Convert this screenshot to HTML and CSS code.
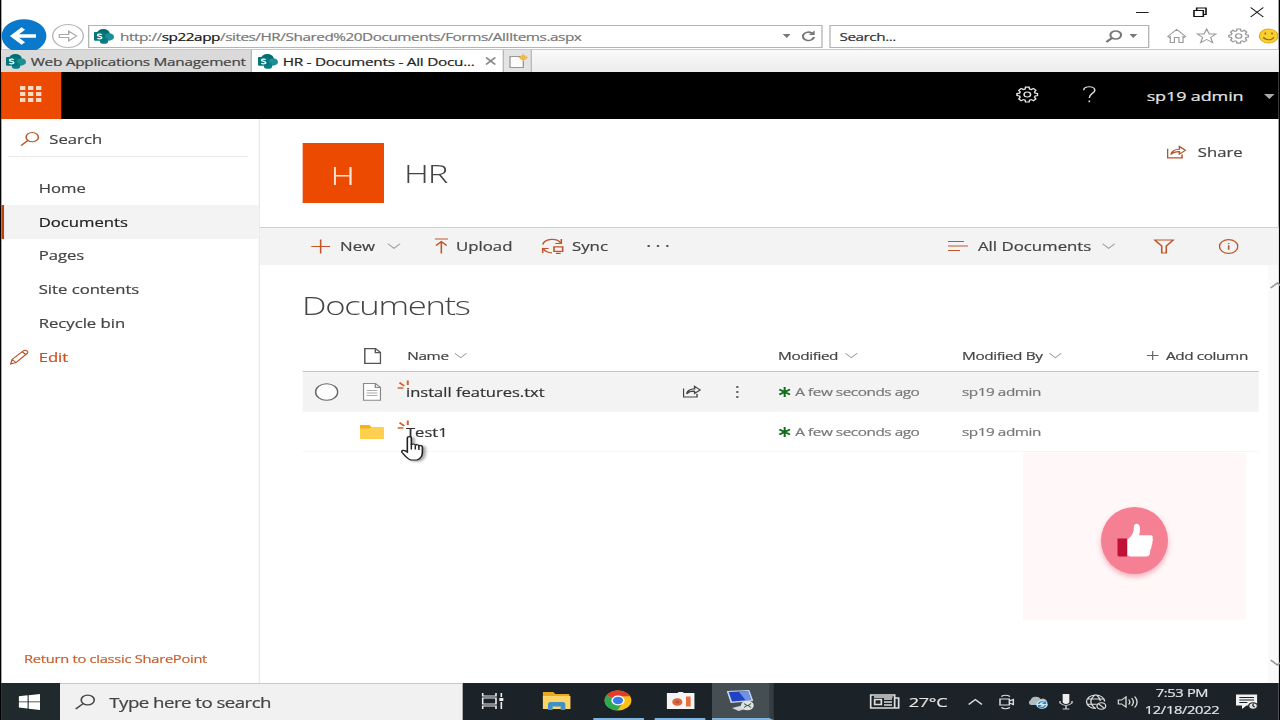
FILE: index.html
```html
<!DOCTYPE html>
<html lang="en">
<head>
  <meta charset="UTF-8">
  <meta name="viewport" content="width=device-width, initial-scale=1.0">
  <title>HR - Documents - All Documents</title>
  <link rel="stylesheet" href="styles.css">
</head>
<body>
  <!-- shared shapes -->
  <svg class="defs" width="0" height="0">
    <symbol id="sharepoint" viewBox="0 0 16 16">
      <circle cx="7.5" cy="5.2" r="5.2" fill="#036c70"/>
      <circle cx="12" cy="8.4" r="4" fill="#1a8f96"/>
      <circle cx="8" cy="12.4" r="3.4" fill="#0b7d84"/>
      <rect x="0" y="3.2" width="9" height="9.4" rx="0.8" fill="#03787c"/>
      <path d="M6.200 6C5.200 5.200 2.900 5.300 2.900 6.700s3.300 1 3.300 2.500-2.300 1.500-3.500.6" fill="none" stroke="#fff" stroke-width="1.3"/>
    </symbol>
    <symbol id="chevron" viewBox="0 0 12 8">
      <path d="M1 1.5l5 5 5-5" fill="none" stroke="currentColor"/>
    </symbol>
    <symbol id="gear" viewBox="0 0 18 18">
      <path d="M7.6 1.2h2.8l.4 2 1.3.6 1.8-1.2 1.9 1.9-1.1 1.8.5 1.3 2 .4v2.2l-2 .4-.5 1.3 1.1 1.8-1.9 1.9-1.8-1.2-1.3.6-.4 2H7.6l-.4-2-1.3-.6-1.8 1.2-1.9-1.9 1.1-1.8-.5-1.3-2-.4V8l2-.4.5-1.3-1.1-1.8 1.9-1.9 1.8 1.2 1.3-.6z" fill="none" stroke="currentColor" stroke-width="1.2"/>
      <circle cx="9" cy="9" r="2.6" fill="none" stroke="currentColor" stroke-width="1.2"/>
    </symbol>
    <symbol id="search" viewBox="0 0 16 16">
      <circle cx="9.8" cy="6" r="4.9" fill="none" stroke="currentColor" stroke-width="1.2"/>
      <path d="M6.3 9.6L.8 15" stroke="currentColor" stroke-width="1.3"/>
    </symbol>
    <symbol id="share" viewBox="0 0 16 14">
      <path d="M.7 3.5v9.8h11.6V9.6M3.4 9.7C4 6.3 6.3 4.1 10.2 4V1.2l4.8 4-4.8 4V6.6C7.2 6.5 5 7.4 3.4 9.7z" fill="none" stroke="currentColor" stroke-width="1.2"/>
    </symbol>
    <symbol id="burst" viewBox="0 0 10 12">
      <path d="M0 8.2h5M1.800 2.200l4 3.800M8.700 0v5" fill="none" stroke="#d2622d" stroke-width="1.700"/>
    </symbol>
  </svg>

  <div class="desktop">
    <div class="titlebar">
      <svg width="13" height="12" viewBox="0 0 13 12"><path d="M2 6.5h9.5" stroke="#222"/></svg>
      <svg width="13" height="12" viewBox="0 0 13 12"><path d="M2.5 4.5h7v6h-7zM4.5 4.500v-2.500h7v6.500h-2" fill="none" stroke="#111" stroke-width="1.2"/></svg>
      <svg width="13" height="12" viewBox="0 0 13 12"><path d="M2 1.500l9.500 9.500M11.500 1.500L2 11" stroke="#111"/></svg>
    </div>

    <div class="navbar">
      <svg class="back" width="36" height="36" viewBox="0 0 36 36">
        <circle cx="18" cy="18" r="16.800" fill="#0a79cc"/>
        <path d="M27 18H10M17.500 10.500L10 18l7.500 7.500" fill="none" stroke="#fff" stroke-width="3.600"/>
      </svg>
      <svg class="forward" width="26" height="26" viewBox="0 0 26 26">
        <circle cx="13" cy="13" r="11.500" fill="#fff" stroke="#b5b5b5"/>
        <path d="M6.500 11.500h7V8l6 5-6 5v-3.500h-7z" fill="none" stroke="#aaa"/>
      </svg>
      <div class="address">
        <svg width="16" height="15"><use href="#sharepoint"/></svg>
        <span class="url">http://<b>sp22app</b>/sites/HR/Shared%20Documents/Forms/AllItems.aspx</span>
        <svg class="caret" width="6" height="4" viewBox="0 0 6 4"><path d="M0 0h6L3 4z" fill="#777"/></svg>
        <svg width="11" height="12" viewBox="0 0 11 12"><path d="M9.500 7a4.200 4.200 0 1 1-1.600-4" fill="none" stroke="#777" stroke-width="1.600"/><path d="M10 .500v4.500H5.500z" fill="#777"/></svg>
      </div>
      <div class="searchbox">
        <span>Search...</span>
        <svg width="13" height="13" class="glass" viewBox="0 0 13 13"><circle cx="7.800" cy="5" r="4" fill="none" stroke="#777" stroke-width="1.600"/><path d="M5 8L.800 12" stroke="#777" stroke-width="1.800"/></svg>
        <svg class="caret" width="6" height="4" viewBox="0 0 6 4"><path d="M0 0h6L3 4z" fill="#777"/></svg>
      </div>
      <div class="tools">
        <svg width="15" height="16" viewBox="0 0 15 16"><path d="M.800 8.500L7.500 1.500l6.700 7-1 .900-.900-.900v6H9.200V9.500H5.800v5H2.700v-6l-.900.900z" fill="none" stroke="#999" stroke-width=".9"/></svg>
        <svg width="16" height="16" viewBox="0 0 16 16"><path d="M8 1l2 5h5l-4 3.300 1.500 5.400L8 11.500l-4.500 3.200L5 9.300 1 6h5z" fill="none" stroke="#999" stroke-width=".9"/></svg>
        <svg class="gray" width="16" height="16"><use href="#gear"/></svg>
        <svg width="15" height="16" viewBox="0 0 15 16"><circle cx="7.500" cy="8" r="7" fill="#fad02f" stroke="#dca719" stroke-width=".8"/><path d="M5 4.500v2M10 4.500v2M3.500 9.300c1.500 3.300 6.500 3.300 8 0" fill="none" stroke="#8b6914" stroke-width="1.100"/></svg>
      </div>
    </div>

    <div class="tabs">
      <div class="tab tab-first">
        <svg width="16" height="15"><use href="#sharepoint"/></svg>
        <span>Web Applications Management</span>
      </div>
      <div class="tab tab-active">
        <svg width="16" height="15"><use href="#sharepoint"/></svg>
        <span>HR - Documents - All Docu...</span>
        <svg class="close" width="8" height="8" viewBox="0 0 8 8"><path d="M.500.500l7 7M7.500.500l-7 7" stroke="#888" stroke-width="1.500"/></svg>
      </div>
      <div class="tab tab-new">
        <svg width="15" height="15" viewBox="0 0 15 15"><path d="M1.500 2.500h10v11h-10z" fill="#fcfcfc" stroke="#999"/><circle cx="11.500" cy="3.500" r="2.600" fill="#f4b942"/><path d="M11.500 0v7M8 3.500h7" stroke="#f4b942"/></svg>
      </div>
    </div>

    <div class="suitebar">
      <div class="waffle"><i></i><i></i><i></i><i></i><i></i><i></i><i></i><i></i><i></i></div>
      <svg class="suite-gear" width="17" height="17"><use href="#gear"/></svg>
      <svg class="suite-help" width="10" height="17" viewBox="0 0 10 17"><path d="M.800 4.200C.900-.500 9.100-.300 9.100 4.200 9.100 7.300 5 7.500 5 12M5 14.500v1.800" fill="none" stroke="#ddd" stroke-width="1.200"/></svg>
      <span class="user">sp19 admin</span>
      <svg class="caret" width="8" height="5" viewBox="0 0 8 5"><path d="M0 0h8L4 5z" fill="#aaa"/></svg>
    </div>

    <div class="page">
      <div class="sidebar">
        <div class="side-search">
          <svg width="15" height="16"><use href="#search"/></svg>
          <span>Search</span>
        </div>
        <div class="side-nav">
          <a>Home</a>
          <a class="selected">Documents</a>
          <a>Pages</a>
          <a>Site contents</a>
          <a>Recycle bin</a>
          <a class="edit">
            <svg width="15" height="16" viewBox="0 0 15 16"><path d="M1 15l1-4.500L11 1.500c1.500-1 3.500 1 2.600 2.600L5 13.500zM2 10.500l3 3M9.700 2.800l2.900 2.900" fill="none" stroke="#b5532a"/></svg>
            Edit
          </a>
        </div>
        <a class="classic">Return to classic SharePoint</a>
      </div>

      <div class="main">
        <div class="site-header">
          <div class="site-logo">H</div>
          <h1>HR</h1>
          <div class="share">
            <svg width="15" height="14"><use href="#share"/></svg>
            <span>Share</span>
          </div>
        </div>

        <div class="commands">
          <svg class="c-plus" width="15" height="15" viewBox="0 0 15 15"><path d="M7.500.500v14M.500 7.500h14" stroke="#c2562a" stroke-width="1.200"/></svg>
          <span class="c-new">New</span>
          <svg class="chev" width="11" height="8"><use href="#chevron"/></svg>
          <svg class="c-up" width="10" height="16" viewBox="0 0 10 16"><path d="M0 1h10M5 3v12.500M1 7.500l4-4 4 4" fill="none" stroke="#c2562a" stroke-width="1.200"/></svg>
          <span class="c-upload">Upload</span>
          <svg class="c-syncicon" width="17" height="16" viewBox="0 0 17 16"><path d="M1 6.500C3 0 12 0 14.500 5M15 1v4.500h-4.500M1 15v-4.500h4.500M1.500 10.800c1.500 3 4 4 6.500 4M9.500 8.800h6.500v4.500H9.500zM11 15.300h3.500" fill="none" stroke="#c2562a" stroke-width="1.200"/></svg>
          <span class="c-sync">Sync</span>
          <svg class="c-more" width="17" height="4" viewBox="0 0 17 4"><circle cx="1.500" cy="2" r="1"/><circle cx="8.500" cy="2" r="1"/><circle cx="15.500" cy="2" r="1"/></svg>
          <svg class="c-lines" width="15" height="10" viewBox="0 0 15 10"><path d="M0 .500h12M0 5h15M0 9.500h9" stroke="#c2562a"/></svg>
          <span class="c-view">All Documents</span>
          <svg class="chev" width="11" height="8"><use href="#chevron"/></svg>
          <svg class="c-filter" width="16" height="15" viewBox="0 0 16 15"><path d="M1 1h14L9.700 7v7H6.300V7z" fill="none" stroke="#c2562a" stroke-width="1.200"/></svg>
          <svg class="c-info" width="15" height="15" viewBox="0 0 15 15"><circle cx="7.500" cy="7.500" r="6.900" fill="none" stroke="#c2562a" stroke-width="1.100"/><path d="M7.500 6.300v4.500M7.500 3.900v1.200" stroke="#c2562a" stroke-width="1.200"/></svg>
        </div>

        <div class="library">
          <h2>Documents</h2>
          <div class="row head">
            <span></span>
            <span class="center"><svg width="13" height="16" viewBox="0 0 13 16"><path d="M.600.600h8l3.800 3.800v11H.600zM8.500.800v3.800h3.800" fill="none" stroke="#555" stroke-width="1.100"/></svg></span>
            <span class="cell">Name <svg width="11" height="7"><use href="#chevron"/></svg></span>
            <span></span>
            <span></span>
            <span class="cell">Modified <svg width="11" height="7"><use href="#chevron"/></svg></span>
            <span class="cell">Modified By <svg width="11" height="7"><use href="#chevron"/></svg></span>
            <span class="cell add"><svg width="9" height="11" viewBox="0 0 9 11"><path d="M4.500 1v9M0 5.500h9" stroke="#666" stroke-width=".9"/></svg>Add column</span>
          </div>
          <div class="row hover">
            <span class="center"><svg width="18" height="18" viewBox="0 0 18 18"><circle cx="9" cy="9" r="8.300" fill="#fff" stroke="#666" stroke-width="1.100"/></svg></span>
            <span class="center"><svg width="14" height="18" viewBox="0 0 14 18"><path d="M.600.600h9l3.800 3.800v12.800H.600zM9.500.800v3.800h3.800" fill="#fff" stroke="#8a8a8a"/><path d="M3 7.500h8M3 10h8M3 12.500h8" stroke="#aaa"/></svg></span>
            <span class="cell name">install features.txt<svg class="burst" width="9" height="12"><use href="#burst"/></svg></span>
            <span class="center"><svg class="dark" width="14" height="13"><use href="#share"/></svg></span>
            <span class="center"><svg width="4" height="14" viewBox="0 0 4 14" fill="#555"><circle cx="2" cy="2" r="1"/><circle cx="2" cy="7" r="1"/><circle cx="2" cy="12" r="1"/></svg></span>
            <span class="cell meta"><svg width="9" height="10" viewBox="0 0 9 10"><path d="M4.500 0v10M.500 2.500l8 5M8.500 2.500l-8 5" stroke="#0f6c18" stroke-width="1.500"/></svg>A few seconds ago</span>
            <span class="cell meta">sp19 admin</span>
            <span></span>
          </div>
          <div class="row">
            <span></span>
            <span class="center"><svg width="18" height="14" viewBox="0 0 18 14"><path d="M0 0h7l1.500 2H18v12H0z" fill="#f0b41c"/><path d="M0 3.500h7L9 2h9v12H0z" fill="#ffd04f"/></svg></span>
            <span class="cell name">Test1<svg class="burst" width="9" height="12"><use href="#burst"/></svg></span>
            <span></span>
            <span></span>
            <span class="cell meta"><svg width="9" height="10" viewBox="0 0 9 10"><path d="M4.500 0v10M.500 2.500l8 5M8.500 2.500l-8 5" stroke="#0f6c18" stroke-width="1.500"/></svg>A few seconds ago</span>
            <span class="cell meta">sp19 admin</span>
            <span></span>
          </div>
        </div>

        <div class="scrollbar">
          <svg width="8" height="8" viewBox="0 0 8 8"><path d="M1 7l5-5 5 5" fill="none" stroke="#999" stroke-width="1.500"/></svg>
          <svg width="8" height="8" viewBox="0 0 8 8"><path d="M1 1l5 5 5-5" fill="none" stroke="#999" stroke-width="1.500"/></svg>
        </div>
      </div>
    </div>

    <div class="taskbar">
      <div class="start">
        <svg width="16" height="16" viewBox="0 0 16 16" fill="#fff"><path d="M0 2.200l6.700-.900v6.200H0zM7.500 1.200L16 0v7.500H7.500zM0 8.300h6.700v6.200L0 13.600zM7.500 8.300H16V16l-8.500-1.200z"/></svg>
      </div>
      <div class="task-search">
        <svg width="16" height="16"><use href="#search"/></svg>
        <span>Type here to search</span>
      </div>
      <div class="task taskview">
        <svg width="17" height="16" viewBox="0 0 17 16"><path d="M1 0v3h10V0M1 16v-3h10v3M1 5h10v6H1zM15 0v4M15 9v7" fill="none" stroke="#eee" stroke-width="1.200"/><path d="M13.500 5h3v3h-3z" fill="#eee"/></svg>
      </div>
      <div class="task">
        <svg width="21" height="18" viewBox="0 0 21 18"><path d="M0 0h8l1.500 2H20v5H0z" fill="#e9a820"/><path d="M0 4h21v13H0z" fill="#ffd466"/><path d="M4 18v-6q0-2 2-2h9q2 0 2 2v6h-3.500v-3.500h-6V18z" fill="#3e92c9"/></svg>
      </div>
      <div class="task open">
        <svg width="21" height="21" viewBox="0 0 22 22"><circle cx="11" cy="11" r="10.500" fill="#fbc116"/><path d="M11 11L1.900 5.700A10.500 10.500 0 0 1 20.100 5.700L20.100 6.500H11z" fill="#e33b2e"/><path d="M11 11L1.900 5.700A10.500 10.500 0 0 0 10.500 21.500L15 13z" fill="#2da94f"/><circle cx="11" cy="11" r="5.200" fill="#fff"/><circle cx="11" cy="11" r="4" fill="#3b7de8"/></svg>
      </div>
      <div class="task open">
        <svg width="21" height="18" viewBox="0 0 21 18"><path d="M0 1h8l1-1h3l1 1h8v16H0z" fill="#f6f4f4"/><circle cx="8" cy="10" r="3.800" fill="#dc653d"/><circle cx="8" cy="10" r="1.300" fill="#b84d2c"/><path d="M14.500 4.500h3.500v10h-3.500z" fill="#e4713d"/></svg>
      </div>
      <div class="task open current">
        <svg width="21" height="21" viewBox="0 0 21 21"><path d="M0 1l17-1 3 11-17 2z" fill="#c8d4ea"/><path d="M1.500 2l14.500-1 2.300 9L4 11.500z" fill="#2043c4"/><path d="M9 1.500l7-.5 2.300 9-4 .5z" fill="#7191e6"/><path d="M4 18l9-3 3 3-7 3z" fill="#d4d8dd"/><circle cx="15.500" cy="15.500" r="4.800" fill="#dfe6df"/><path d="M13 13.500l2.200 2-2.200 2M18.300 13.500l-2.200 2 2.200 2" fill="none" stroke="#3d5945"/></svg>
      </div>

      <div class="tray">
        <div class="news"><svg width="23" height="15" viewBox="0 0 23 15"><path d="M1 1h18v13H1zM19 4h3v10h-3M4 5.500h5v5H4zM11 5h6M11 8h6M11 11h6M3.500 3h14" fill="none" stroke="#ddd" stroke-width="1.300"/></svg></div>
        <div class="temp">27°C</div>
        <div class="up"><svg width="11" height="7" viewBox="0 0 11 7"><path d="M.500 6.500l5-5 5 5" fill="none" stroke="#ddd" stroke-width="1.200"/></svg></div>
        <div class="cam"><svg width="12" height="16" viewBox="0 0 12 16"><path d="M1 5h7v6H1zM8 7l3-1.500v5L8 9M2 2.500Q5 0 8.500 2.500M2 13.500Q5 16 8.500 13.500" fill="none" stroke="#ddd" stroke-width="1.100"/></svg></div>
        <div class="cloud"><svg width="16" height="14" viewBox="0 0 16 14"><path d="M3 10a3 3 0 0 1 0-5 4 4 0 0 1 7.500-1A3.500 3.500 0 0 1 14 10z" fill="#b3babd"/><circle cx="11.500" cy="9.500" r="4.300" fill="#c9e7f8"/><path d="M9 9a2.600 2.600 0 0 1 5-.6M14 10.200a2.600 2.600 0 0 1-5 .5M14 6.500v2h-2M9 12.500v-2h2" fill="none" stroke="#2783be" stroke-width="1.100"/></svg></div>
        <div class="mic"><svg width="11" height="16" viewBox="0 0 11 16"><path d="M3 0h5v8.500q-2.500 3-5 0z" fill="#eee"/><path d="M1 7v2q4.500 5 9 0V7M5.500 11.500V15M3 15h5" fill="none" stroke="#ccc" stroke-width="1.100"/></svg></div>
        <div class="globe"><svg width="16" height="16" viewBox="0 0 16 16"><path d="M14.500 7.500A6.800 6.800 0 1 0 8 14.500M7.700.700C3 5 3 10 7.700 14.500M7.700.700c2.300 2 3.300 4.300 3.500 6.300M1.500 5h12.500M1.500 10.300h7" fill="none" stroke="#ddd"/><circle cx="12" cy="12" r="3.300" fill="#1b2328" stroke="#ddd"/><path d="M9.700 9.700l4.600 4.600" stroke="#ddd"/></svg></div>
        <div class="sound"><svg width="16" height="14" viewBox="0 0 16 14"><path d="M.700 5v4h2.500L6.500 12V2L3.200 5zM8.500 4.500q1.700 2.500 0 5M10.700 3q2.700 4 0 8M13 1.500q3.700 5.500 0 11" fill="none" stroke="#ddd"/></svg></div>
        <div class="clock"><span>7:53 PM</span><span>12/18/2022</span></div>
        <div class="notes"><svg width="16" height="16" viewBox="0 0 16 16"><path d="M0 .500h16v11h-8L4.500 15v-3.500H0z" fill="#f1f1f1"/><path d="M2.500 3.500h11M2.500 6h11M2.500 8.500h6" stroke="#1b2328"/><circle cx="12.800" cy="12" r="3.300" fill="#e0e0e0" stroke="#1b2328"/><path d="M13.500 9.500q-2 2 .5 3.500" fill="none" stroke="#1b2328"/></svg></div>
      </div>
    </div>

    <svg class="pointer" width="20" height="27" viewBox="0 0 20 27">
      <path d="M6.500 16V3.200C6.500 1 9.500 1 9.500 3.200V10c.600-1.500 3-1.300 3 .500.500-1.300 2.700-1 2.700.700.600-1 2.600-.700 2.600 1V17c0 4-2 7-4 8H9c-2-1-4.500-4.500-6.300-7.300C1.500 15.500 3.500 14 6.500 17z" fill="#fff" stroke="#222" stroke-width="1.200"/>
      <path d="M9.500 9.500v5M12.500 10.500v4M15.200 11.500v3.500" stroke="#222" stroke-width="1.100"/>
    </svg>
  </div>

  <div class="like-panel">
    <div class="like">
      <svg width="38" height="36" viewBox="0 0 38 36"><path d="M1.500 16.500h9.500v18H3q-1.500 0-1.500-1.500z" fill="#bf1236"/><path d="M11.500 17.500c4-3 6.500-7 6.300-12 0-5 5.700-5 6.200.500.200 3-.300 5.500-1 7.300h12c1.500 0 2 1 1.500 2.400.600 1.500.500 3-.200 4 .300 1.800 0 3-.800 4 .200 1.700-.300 3-1.200 3.800 0 5-1 7-4.300 7H15.500c-2.500 0-4-.5-4-2z" fill="#fff"/></svg>
    </div>
  </div>
</body>
</html>
```
FILE: styles.css
```css
* {
  box-sizing: border-box;
}
body {
  margin: 0;
  width: 1280px;
  height: 720px;
  overflow: hidden;
  background: #fff;
  font-family: "Open Sans", "Noto Sans", sans-serif;
  color: #444;
}
svg {
  display: block;
  flex: none;
}
.defs {
  position: absolute;
}

/* 4:3 desktop shown on a widescreen display */
.desktop {
  position: relative;
  width: 960px;
  height: 720px;
  display: flex;
  flex-direction: column;
  transform: scaleX(1.33333);
  transform-origin: 0 0;
  border-left: 1px solid #000;
  border-right: 1px solid #000;
  font-size: 12.5px;
  white-space: nowrap;
  -webkit-text-stroke: 0.2px;
}

/* browser */
.titlebar {
  height: 23px;
  display: flex;
  justify-content: flex-end;
  align-items: center;
  gap: 30px;
  padding: 1px 10px 0 0;
}
.navbar {
  height: 27px;
  display: flex;
  align-items: center;
  border-bottom: 1px solid #c8c8c8;
}
.back {
  margin: -5px 0 -5px -1px;
}
.forward {
  margin: 0 2px 0 2px;
}
.address,
.searchbox {
  display: flex;
  align-items: center;
  height: 23px;
  border: 1px solid #b4b4b4;
  background: #fff;
  font-size: 11.5px;
  letter-spacing: -0.35px;
}
.address {
  width: 552px;
  padding: 0 4px 0 3px;
}
.url {
  flex: 1;
  margin-left: 4px;
  color: #777;
}
.url b {
  font-weight: 500;
  color: #111;
}
.address .caret {
  margin-right: 8px;
}
.searchbox {
  width: 241px;
  margin-left: 5px;
  padding: 0 8px 0 7px;
  color: #333;
}
.searchbox .glass {
  margin-left: auto;
  margin-right: 5px;
}
.tools {
  display: flex;
  gap: 7.5px;
  margin-left: 12.5px;
}
.gray {
  color: #999;
}
.tabs {
  height: 22px;
  display: flex;
  background: linear-gradient(#fafafa, #ececec);
}
.tab {
  display: flex;
  align-items: center;
  gap: 3px;
  padding-left: 4px;
  border-right: 1px solid #b8b8b8;
  font-size: 11.5px;
  letter-spacing: -0.2px;
}
.tab-first {
  width: 188px;
  padding-left: 3px;
  background: #dadada;
}
.tab-active {
  width: 189px;
  background: #fff;
  color: #222;
}
.close {
  margin-left: auto;
  margin-right: 5px;
}
.tab-new {
  width: 21px;
  padding-left: 3px;
  background: #e4e4e4;
}

/* suite bar */
.suitebar {
  height: 47px;
  display: flex;
  align-items: center;
  background: #000;
  color: #e6e6e6;
}
.waffle {
  width: 45px;
  height: 47px;
  display: grid;
  grid-template-columns: repeat(3, 4px);
  gap: 2px;
  justify-content: center;
  align-content: center;
  padding: 0 2px 3px 0;
  background: #eb4a00;
}
.waffle i {
  height: 4px;
  background: #ffd9c4;
}
.suite-gear {
  margin-left: 716px;
  margin-bottom: 2px;
}
.suite-help {
  margin-left: 33px;
  margin-bottom: 2px;
}
.user {
  width: 74px;
  margin-left: 38px;
  padding-top: 1px;
  font-size: 13.5px;
  letter-spacing: -0.1px;
}
.suitebar .caret {
  margin-top: 2px;
  margin-left: 14px;
}

/* page */
.page {
  height: 564px;
  display: flex;
}
.sidebar {
  width: 194px;
  display: flex;
  flex-direction: column;
  border-right: 1px solid #eaeaea;
}
.side-search {
  height: 38px;
  display: flex;
  align-items: center;
  gap: 7px;
  margin: 0 8px 0 5px;
  padding: 3px 0 0 9px;
  border-bottom: 1px solid #eaeaea;
}
.side-nav {
  display: flex;
  flex-direction: column;
  margin-top: 14px;
}
.side-nav a {
  height: 33.8px;
  display: flex;
  align-items: center;
  padding-top: 1px;
  padding-left: 28px;
}
.side-nav .selected {
  border-left: 2px solid #c43e0a;
  padding-left: 26px;
  background: #f3f3f3;
  color: #222;
}
.side-nav .edit {
  padding-left: 6px;
  gap: 7px;
  color: #d0501c;
}
.side-search svg {
  color: #b5532a;
}
.classic {
  margin: auto 0 16px 17px;
  font-size: 11px;
  letter-spacing: -0.2px;
  line-height: 17px;
  color: #c8602f;
}
.main {
  flex: 1;
  display: grid;
  grid-template-columns: 1fr 8px;
  grid-template-rows: 108px 38px 1fr;
}
.site-header,
.commands {
  grid-column: 1 / 3;
}
.site-header {
  display: flex;
  align-items: flex-start;
  padding: 24px 27px 0 31.5px;
}
.site-logo {
  width: 61px;
  height: 60px;
  padding-top: 4px;
  background: #eb4a00;
  color: #ffe9dd;
  font-size: 25px;
  font-weight: 300;
  line-height: 56px;
  text-align: center;
}
.site-header h1 {
  margin: 0 0 0 15.5px;
  font-size: 26px;
  font-weight: 300;
  letter-spacing: -0.8px;
  line-height: 60px;
  -webkit-text-stroke: 0;
}
.share {
  display: flex;
  align-items: center;
  gap: 8px;
  height: 18px;
  margin-left: auto;
  color: #444;
}
.share svg {
  color: #b5532a;
}
.commands {
  display: flex;
  align-items: center;
  padding: 0 0 1px 38px;
  border-top: 1px solid #cfcfcf;
  background: #f3f3f3;
  font-size: 12.6px;
}
.chev,
.head svg {
  color: #999;
}
.c-new {
  width: 27px;
  margin: 0 8px 0 7px;
}
.c-up {
  margin: 0 6px 0 25px;
}
.c-upload {
  width: 43px;
}
.c-syncicon {
  margin: 0 6px 0 21px;
}
.c-sync {
  width: 28px;
}
.c-more {
  margin-left: 28px;
  fill: #444;
}
.c-lines {
  margin-left: 209px;
}
.c-view {
  width: 85px;
  margin: 0 7.5px;
}
.c-filter {
  margin-left: 27.5px;
}
.c-info {
  margin-left: 33px;
}
.library {
  padding: 22px 7px 0 31.5px;
}
.library h2 {
  margin: 0;
  height: 53px;
  font-size: 26px;
  font-weight: 300;
  letter-spacing: -1px;
  line-height: 37px;
  -webkit-text-stroke: 0;
}
.row {
  height: 40px;
  display: grid;
  grid-template-columns: 36px 33px 209px 28px 41px 138px 138px 1fr;
  align-items: center;
  border-bottom: 1px solid #f6f6f6;
}
.head {
  height: 32px;
  border-bottom: 1px solid #c4c4c4;
  font-size: 11.5px;
  letter-spacing: -0.3px;
}
.hover {
  background: #f3f3f3;
}
.center {
  display: flex;
  justify-content: center;
}
.cell {
  display: flex;
  align-items: center;
  gap: 4px;
  padding-left: 10px;
}
.name {
  position: relative;
  padding-top: 1px;
  padding-left: 9px;
  color: #333;
  font-size: 12.4px;
}
.burst {
  position: absolute;
  left: 2.5px;
  top: -3px;
}
.add {
  gap: 6px;
}
.dark {
  color: #444;
}
.meta {
  color: #777;
  font-size: 11.5px;
  letter-spacing: -0.35px;
}
.scrollbar {
  display: flex;
  flex-direction: column;
  justify-content: space-between;
  align-items: flex-end;
  padding: 16px 0 16px;
  background: #fafafa;
}
.scrollbar svg {
  margin-right: -1px;
}

/* taskbar */
.taskbar {
  height: 37px;
  display: flex;
  background: #1b2328;
  color: #e4e4e4;
}
.start {
  width: 43.5px;
  display: flex;
  align-items: center;
  justify-content: center;
  padding-right: 2px;
  background: #20292b;
}
.task-search {
  width: 302px;
  display: flex;
  align-items: center;
  gap: 10.5px;
  padding-left: 11px;
  border-top: 1px solid #c8c8c8;
  background: #f1f1f1;
  color: #444;
  font-size: 14px;
  letter-spacing: -0.4px;
}
.task {
  width: 46.5px;
  display: flex;
  align-items: center;
  justify-content: center;
  border-bottom: 2px solid transparent;
}
.taskview {
  width: 47.5px;
  padding-right: 2px;
}
.open {
  background: linear-gradient(#7db3de, #7db3de) center bottom / 38px 2px no-repeat;
  background-origin: border-box;
  background-clip: border-box;
}
.current {
  background-color: #454f53;
  background-size: 100% 2px;
  border-right: 3px solid #343e42;
}
.tray {
  flex: 1;
  display: flex;
  margin-left: 65.5px;
}
.tray div {
  display: flex;
  align-items: center;
  justify-content: center;
}
.tray .news {
  width: 36px;
}
.tray .temp {
  width: 39px;
  justify-content: flex-start;
  font-size: 13.5px;
  letter-spacing: -0.2px;
}
.tray .up {
  width: 22px;
}
.tray .cam {
  width: 24px;
}
.tray .cloud,
.tray .mic {
  width: 22px;
}
.tray .globe {
  width: 23px;
}
.tray .sound {
  width: 24px;
}
.tray .clock {
  width: 58px;
  flex-direction: column;
  font-size: 11px;
  letter-spacing: -0.25px;
  line-height: 16.5px;
}
.tray .notes {
  width: 39px;
}
.pointer {
  position: absolute;
  left: 298px;
  top: 435px;
  filter: drop-shadow(2px 1px 1px rgba(0, 0, 0, 0.35));
}

/* reaction overlay */
.like-panel {
  position: absolute;
  left: 1023px;
  top: 453px;
  width: 223px;
  height: 167px;
  display: flex;
  align-items: center;
  justify-content: center;
  padding-top: 7px;
  background: #fff7f8;
}
.like {
  width: 67px;
  height: 67px;
  display: flex;
  align-items: center;
  justify-content: center;
  border-radius: 50%;
  background: #f57f93;
  box-shadow: 0 3px 5px rgba(240, 110, 130, 0.5);
}
```
